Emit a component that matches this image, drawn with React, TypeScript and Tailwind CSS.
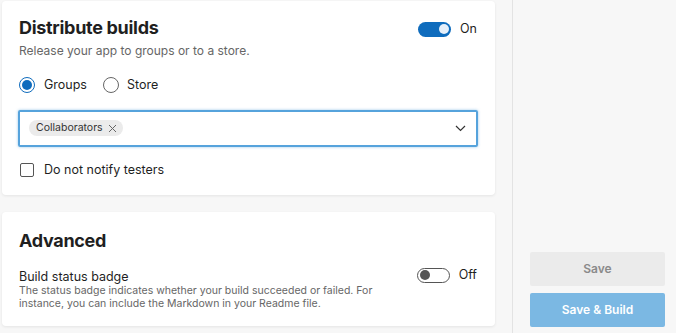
import { useState } from "react";

export default function App() {
  const [enabled, setEnabled] = useState(true);
  const [badge, setBadge] = useState(false);
  const [target, setTarget] = useState<"groups" | "store">("groups");
  const [noNotify, setNoNotify] = useState(false);

  return (
    <div
      className="flex h-[333px] w-[676px] overflow-hidden bg-[#f7f7f7] text-[#1f1f1f]"
      style={{ fontFamily: "Inter, 'Noto Sans', sans-serif" }}
    >
      <main className="flex w-[512px] flex-col gap-[17px] pl-[2px] pr-[17px] pt-[1px]">
        {/* distribute card */}
        <section className="h-[194px] rounded-[4px] bg-white px-[17px] pt-[15px] shadow-[0_1px_3px_rgba(0,0,0,0.08)]">
          <div className="flex items-start justify-between">
            <div>
              <h2 className="text-[18px] font-bold leading-[24px] tracking-[-0.3px]">Distribute builds</h2>
              <p className="mt-[3px] text-[12px] leading-[16px] text-[#666]">
                Release your app to groups or to a store.
              </p>
            </div>
            <button
              onClick={() => setEnabled(!enabled)}
              className="mr-[1px] mt-[4px] flex items-center gap-[9px] text-[12.5px]"
            >
              <span className="flex h-[15px] w-[33px] items-center justify-end rounded-full bg-[#0f6cbd] px-[2px]">
                <span className="h-[10px] w-[10px] rounded-full bg-[#e6f0fa]" />
              </span>
              {enabled ? "On" : "Off"}
            </button>
          </div>

          <div className="mt-[17px] flex items-center text-[12.5px]">
            <label className="flex cursor-pointer items-center gap-[9px]" onClick={() => setTarget("groups")}>
              <span className="flex h-[16px] w-[16px] items-center justify-center rounded-full border border-[#0f6cbd]">
                {target === "groups" && <span className="h-[10px] w-[10px] rounded-full bg-[#0f6cbd]" />}
              </span>
              Groups
            </label>
            <label className="ml-[16px] flex cursor-pointer items-center gap-[8px]" onClick={() => setTarget("store")}>
              <span className="flex h-[16px] w-[16px] items-center justify-center rounded-full border border-[#666]">
                {target === "store" && <span className="h-[10px] w-[10px] rounded-full bg-[#0f6cbd]" />}
              </span>
              Store
            </label>
          </div>

          <div className="mt-[15px] flex h-[37px] w-[460px] -translate-x-[1px] items-center justify-between rounded-[2px] border-[2px] border-[#56a3dc] pl-[9px] pr-[10px] shadow-[0_0_3px_rgba(86,163,220,0.6)]">
            <span className="flex h-[16px] items-center gap-[5px] rounded-full bg-[#ebebeb] pl-[7px] pr-[6px] text-[10.5px] text-[#333]">
              Collaborators
              <svg width="9" height="9" viewBox="0 0 9 9" className="text-[#666]">
                <path d="M1 1 L8 8 M8 1 L1 8" stroke="currentColor" strokeWidth="1" />
              </svg>
            </span>
            <svg width="11" height="7" viewBox="0 0 11 7" className="text-[#333]">
              <path d="M1 1 L5.5 5.5 L10 1" fill="none" stroke="currentColor" strokeWidth="1.2" />
            </svg>
          </div>

          <label
            className="mt-[14px] flex cursor-pointer items-center gap-[10px] text-[12.5px]"
            onClick={() => setNoNotify(!noNotify)}
          >
            <span className="ml-[1px] h-[14px] w-[14px] rounded-[2px] border border-[#555]" />
            Do not notify testers
          </label>
        </section>

        {/* advanced card */}
        <section className="h-[114px] rounded-[4px] bg-white px-[17px] pt-[17px] shadow-[0_1px_3px_rgba(0,0,0,0.08)]">
          <h2 className="text-[18px] font-bold leading-[24px] tracking-[-0.3px]">Advanced</h2>
          <div className="mt-[16px] flex items-start justify-between">
            <div className="w-[360px]">
              <div className="text-[12.5px] leading-[15px]">Build status badge</div>
              <p className="text-[10.5px] leading-[13px] text-[#666]">
                The status badge indicates whether your build succeeded or failed. For instance, you can include the
                Markdown in your Readme file.
              </p>
            </div>
            <button
              onClick={() => setBadge(!badge)}
              className="mr-[1px] mt-[-3px] flex items-center gap-[9px] text-[12.5px]"
            >
              <span className="flex h-[15px] w-[33px] items-center rounded-full border border-[#555] px-[2px]">
                <span className="h-[10px] w-[10px] rounded-full bg-[#555]" />
              </span>
              {badge ? "On" : "Off"}
            </button>
          </div>
        </section>
      </main>

      <aside className="flex flex-1 flex-col justify-end gap-[7px] border-l border-[#e3e3e3] pb-[6px] pl-[17px] pr-[11px]">
        <button className="h-[34px] rounded-[2px] bg-[#ebebeb] text-[12px] font-semibold text-[#8a8a8a]">Save</button>
        <button className="h-[34px] rounded-[2px] bg-[#7bb8e3] text-[12px] font-semibold text-white">
          Save &amp; Build
        </button>
      </aside>
    </div>
  );
}
